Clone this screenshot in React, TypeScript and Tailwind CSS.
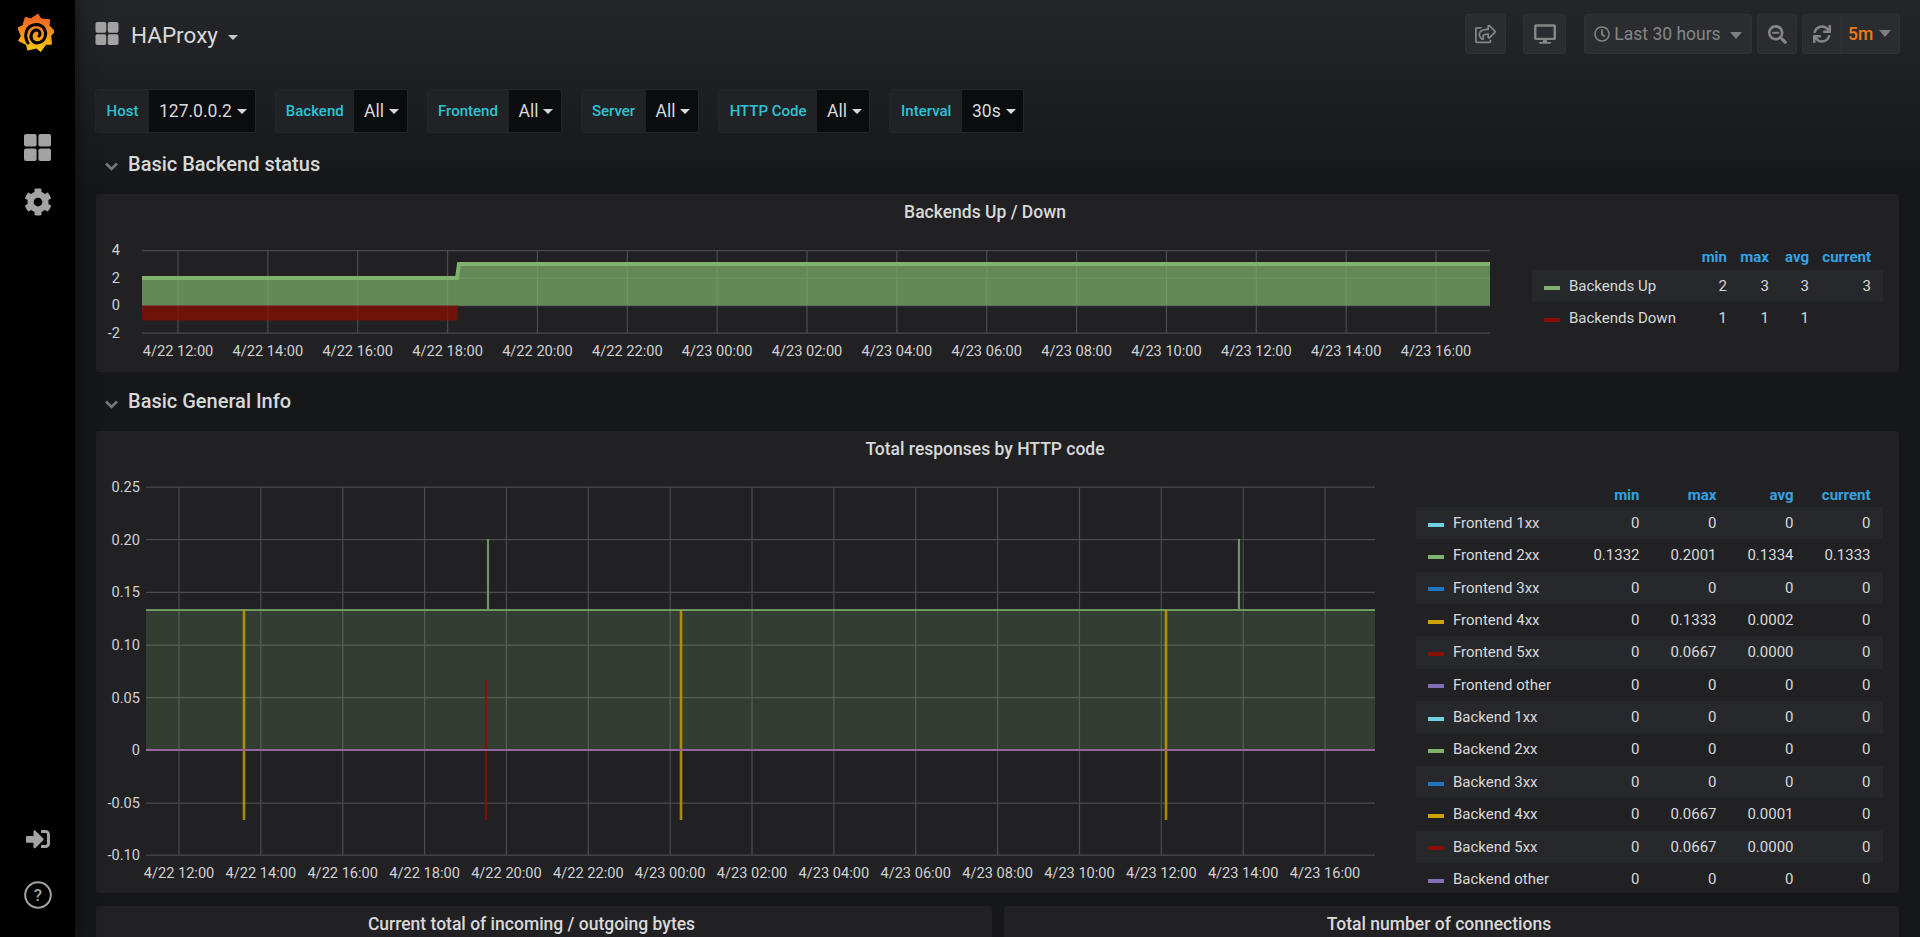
import React from 'react';
import { FaCog, FaDesktop, FaRegClock, FaRegShareSquare, FaSearchMinus, FaSignInAlt, FaSync } from 'react-icons/fa';

const font = { fontFamily: 'Roboto, "Noto Sans", sans-serif' };

// Rounded four-square grafana dashboard icon
const GridIcon = ({ className }: { className: string }) => (
  <svg viewBox="0 0 27 27" className={className} fill="currentColor">
    <rect x="0" y="0" width="12.6" height="12.6" rx="2" />
    <rect x="14.4" y="0" width="12.6" height="12.6" rx="2" />
    <rect x="0" y="14.4" width="12.6" height="12.6" rx="2" />
    <rect x="14.4" y="14.4" width="12.6" height="12.6" rx="2" />
  </svg>
);

// Nine teeth around the logo centre
const gearPath = (() => {
  const pts: string[] = [];
  for (let i = 0; i < 9; i++) {
    const a = ((i * 40 - 84) * Math.PI) / 180;
    const step = (12 * Math.PI) / 180;
    const p = (r: number, t: number) => `${(18 + r * Math.cos(t)).toFixed(2)} ${(20 + r * Math.sin(t)).toFixed(2)}`;
    pts.push(p(15.2, a - 2 * step), p(19, a), p(15.2, a + step));
  }
  return `M${pts.join('L')}Z`;
})();

const Logo = () => (
  <svg viewBox="0 0 36 39" className="w-[36px] h-[39px]">
    <defs>
      <linearGradient id="lg" x1="0" y1="0" x2="0" y2="1">
        <stop offset="0" stopColor="#f05a28" />
        <stop offset="1" stopColor="#fbca0a" />
      </linearGradient>
    </defs>
    <path fill="url(#lg)" stroke="url(#lg)" strokeLinejoin="round" d={gearPath} />
    <path
      fill="none"
      stroke="#000"
      strokeWidth="3"
      strokeLinecap="round"
      d="M10 30C6 24 7 12 18 11.5C26 11.5 29 19 27 24C25 30 17 32 14 27C11 22 15 16.5 19 17C22 17.5 23 21 21 23"
    />
  </svg>
);

const HelpIcon = () => (
  <svg viewBox="0 0 28 28" className="w-[28px] h-[28px] mt-[30px] mb-[28px]" style={font}>
    <circle cx="14" cy="14" r="12.8" fill="none" stroke="currentColor" strokeWidth="2" />
    <text x="14" y="20" textAnchor="middle" fontSize="17" fontWeight="500" fill="currentColor">?</text>
  </svg>
);

const Caret = ({ className }: { className: string }) => (
  <span className={`inline-block border-x-[5px] border-x-transparent border-t-[5px] ${className}`} />
);

const variables = [
  { label: 'Host', value: '127.0.0.2', labelW: 'w-[53px]', valueW: 'w-[105.5px]' },
  { label: 'Backend', value: 'All', labelW: 'w-[78.5px]', valueW: 'w-[52.5px]' },
  { label: 'Frontend', value: 'All', labelW: 'w-[81px]', valueW: 'w-[52px]' },
  { label: 'Server', value: 'All', labelW: 'w-[64px]', valueW: 'w-[52.6px]' },
  { label: 'HTTP Code', value: 'All', labelW: 'w-[98px]', valueW: 'w-[52.4px]' },
  { label: 'Interval', value: '30s', labelW: 'w-[71.5px]', valueW: 'w-[61px]' },
];

const NavBtn = ({ children, className }: { children: React.ReactNode; className: string }) => (
  <div className={`h-[40px] flex items-center justify-center rounded-[3px] bg-[#2b2c2f] border border-[#303134] text-[#858585] ${className}`}>
    {children}
  </div>
);

const Row = ({ title, className }: { title: string; className: string }) => (
  <div className={`flex items-center pl-[9px] ${className}`}>
    <svg viewBox="0 0 13 9" className="w-[13px] h-[9px] mt-[6px] text-[#777]" fill="none" stroke="currentColor" strokeWidth="2.6">
      <path d="M1 1.5l5.5 5.5 5.5-5.5" />
    </svg>
    <span className="ml-[10px] text-[20px] font-medium text-[#d8d9da]">{title}</span>
  </div>
);

const Title = ({ text }: { text: string }) => (
  <div className="h-[36px] flex items-center justify-center pr-[25px] text-[17.5px] font-medium text-[#d8d9da]">{text}</div>
);

const xLabels = ['4/22 12:00', '4/22 14:00', '4/22 16:00', '4/22 18:00', '4/22 20:00', '4/22 22:00', '4/23 00:00', '4/23 02:00', '4/23 04:00', '4/23 06:00', '4/23 08:00', '4/23 10:00', '4/23 12:00', '4/23 14:00', '4/23 16:00'];
const GRID = '#4a4b4d';
const AXIS = '#d0d1d3';

const UpDownChart = () => (
  <svg viewBox="96 230 1436 142" className="w-[1436px] h-[142px] shrink-0" style={font}>
    {[250.5, 278, 305.5, 333].map(y => <line key={y} x1="142" x2="1490" y1={y} y2={y} stroke={GRID} strokeWidth="1.25" />)}
    {xLabels.map((l, i) => {
      const x = 178 + i * 89.86;
      return (
        <g key={l}>
          <line x1={x} x2={x} y1="250" y2="333" stroke={GRID} strokeWidth="1.25" />
          <text x={x} y="356" textAnchor="middle" fontSize="14.6" fill={AXIS}>{l}</text>
        </g>
      );
    })}
    {[['4', 250], ['2', 277.5], ['0', 305], ['-2', 333]].map(([t, y]) => (
      <text key={t} x="120" y={Number(y) + 5} textAnchor="end" fontSize="14.6" fill={AXIS}>{t}</text>
    ))}
    <path d="M142 278H457L459 264H1490V305.5H142Z" fill="#7eb26d" fillOpacity="0.72" />
    <path d="M142 278H457L459 264H1490" fill="none" stroke="#7eb26d" strokeWidth="4" />
    <rect x="142" y="305.5" width="316" height="15" fill="#890f02" fillOpacity="0.75" />
  </svg>
);

const HttpChart = () => {
  const yTicks: [string, number][] = [['0.25', 487], ['0.20', 539.7], ['0.15', 592.3], ['0.10', 645], ['0.05', 697.7], ['0', 750], ['-0.05', 803], ['-0.10', 855]];
  return (
    <svg viewBox="96 467 1320 426" className="w-[1320px] h-[426px] shrink-0" style={font}>
      {yTicks.map(([t, y]) => (
        <g key={t}>
          <line x1="146" x2="1375" y1={y} y2={y} stroke={GRID} strokeWidth="1.25" />
          <text x="140" y={y + 5} textAnchor="end" fontSize="14.6" fill={AXIS}>{t}</text>
        </g>
      ))}
      {xLabels.map((l, i) => {
        const x = 179 + i * 81.86;
        return (
          <g key={l}>
            <line x1={x} x2={x} y1="487" y2="855" stroke={GRID} strokeWidth="1.25" />
            <text x={x} y="878" textAnchor="middle" fontSize="14.6" fill={AXIS}>{l}</text>
          </g>
        );
      })}
      <rect x="146" y="610" width="1229" height="140" fill="#7eb26d" fillOpacity="0.2" />
      <path d="M146 610H1375M488 610V539M1239 610V539" fill="none" stroke="#7eb26d" strokeOpacity="0.8" strokeWidth="2.2" />
      <path d="M486 680V820" stroke="#890f02" strokeOpacity="0.8" strokeWidth="2.4" />
      <path d="M244 610V820M681 610V820M1166 610V820" stroke="#cca300" strokeOpacity="0.8" strokeWidth="2.6" />
      <line x1="146" x2="1375" y1="750" y2="750" stroke="#93659a" strokeWidth="2.2" />
    </svg>
  );
};

const upDown = [
  { name: 'Backends Up', color: 'bg-[#7eb26d]', vals: ['2', '3', '3', '3'] },
  { name: 'Backends Down', color: 'bg-[#890f02]', vals: ['1', '1', '1', ''] },
];

const http = [
  { name: 'Frontend 1xx', color: 'bg-[#6ed0e0]', vals: ['0', '0', '0', '0'] },
  { name: 'Frontend 2xx', color: 'bg-[#7eb26d]', vals: ['0.1332', '0.2001', '0.1334', '0.1333'] },
  { name: 'Frontend 3xx', color: 'bg-[#1f78c1]', vals: ['0', '0', '0', '0'] },
  { name: 'Frontend 4xx', color: 'bg-[#cca300]', vals: ['0', '0.1333', '0.0002', '0'] },
  { name: 'Frontend 5xx', color: 'bg-[#890f02]', vals: ['0', '0.0667', '0.0000', '0'] },
  { name: 'Frontend other', color: 'bg-[#806eb7]', vals: ['0', '0', '0', '0'] },
  { name: 'Backend 1xx', color: 'bg-[#6ed0e0]', vals: ['0', '0', '0', '0'] },
  { name: 'Backend 2xx', color: 'bg-[#7eb26d]', vals: ['0', '0', '0', '0'] },
  { name: 'Backend 3xx', color: 'bg-[#1f78c1]', vals: ['0', '0', '0', '0'] },
  { name: 'Backend 4xx', color: 'bg-[#cca300]', vals: ['0', '0.0667', '0.0001', '0'] },
  { name: 'Backend 5xx', color: 'bg-[#890f02]', vals: ['0', '0.0667', '0.0000', '0'] },
  { name: 'Backend other', color: 'bg-[#806eb7]', vals: ['0', '0', '0', '0'] },
];

const LegendName = ({ name, color }: { name: string; color: string }) => (
  <div className="flex items-center pl-[12px] text-left">
    <span className={`w-[16px] h-[4px] mt-[3px] ${color}`} />
    <span className="ml-[9px] whitespace-nowrap">{name}</span>
  </div>
);

export default function App() {
  return (
    <div className="flex h-screen overflow-hidden text-[#d8d9da] bg-[linear-gradient(180deg,#242528_10px,#161719_190px)]" style={font}>
      {/* Side menu */}
      <aside className="w-[75px] shrink-0 bg-black flex flex-col items-center text-[#a3a3a3] shadow-[0_0_18px_rgba(0,0,0,0.55)] z-10">
        <div className="mt-[13px] ml-[-3px]"><Logo /></div>
        <GridIcon className="w-[27px] h-[27px] mt-[82px]" />
        <FaCog className="w-[28px] h-[28px] mt-[27px]" />
        <FaSignInAlt className="w-[24px] h-[24px] mt-auto" />
        <HelpIcon />
      </aside>

      <main className="flex-1 min-w-0 pl-[21px] pr-[21px]">
        {/* Nav */}
        <div className="h-[68px] pt-[14px] flex items-start">
          <GridIcon className="w-[24px] h-[23px] mt-[8px] text-[#a3a3a3] ml-[-1px]" />
          <span className="ml-[12px] mt-[5px] text-[22.5px] leading-[32px] text-[#d8d9da]">HAProxy</span>
          <Caret className="ml-[10px] mt-[21px] border-t-[#c8c8c8]" />
          <div className="ml-auto mr-[-1px] flex">
            <NavBtn className="w-[41px]"><FaRegShareSquare className="w-[21px] h-[20px]" /></NavBtn>
            <NavBtn className="w-[43px] ml-[17px]"><FaDesktop className="w-[22px] h-[20px]" /></NavBtn>
            <NavBtn className="w-[168px] ml-[18px] text-[17.5px]">
              <FaRegClock className="w-[16px] h-[16px] mr-[4px]" />
              Last 30 hours
              <Caret className="ml-[9px] mt-[2px] border-x-[6px] border-t-[7px] border-t-[#7f7f7f]" />
            </NavBtn>
            <NavBtn className="w-[40px] ml-[5px]"><FaSearchMinus className="w-[19px] h-[19px]" /></NavBtn>
            <NavBtn className="w-[98px] ml-[5px]">
              <div className="w-[38px] h-full flex items-center justify-center border-r border-[#303134]"><FaSync className="w-[18px] h-[18px]" /></div>
              <div className="flex-1 flex items-center pl-[7px] text-[17.5px] font-medium text-[#eb7b18]">
                5m
                <Caret className="ml-[6px] mt-[-2px] border-x-[6px] border-t-[7px] border-t-[#7f7f7f]" />
              </div>
            </NavBtn>
          </div>
        </div>

        {/* Template variables */}
        <div className="mt-[21px] h-[44px] flex gap-[19px] ml-[-1px]">
          {variables.map(v => (
            <div key={v.label} className="flex rounded-[3px] border border-[#262628] overflow-hidden">
              <div className={`flex items-center justify-center bg-[#212226] text-[15px] font-medium text-[#2bc4d4] ${v.labelW}`}>{v.label}</div>
              <div className={`flex items-center bg-[#0b0c0e] pl-[10px] text-[17.5px] text-[#d8d9da] ${v.valueW}`}>
                {v.value}
                <Caret className="ml-[5px] mt-[1px] border-t-[#d8d9da]" />
              </div>
            </div>
          ))}
        </div>

        <Row title="Basic Backend status" className="h-[61px]" />
        <section className="h-[178px] rounded-[3px] bg-[#212124] overflow-hidden">
          <Title text="Backends Up / Down" />
          <div className="flex">
            <UpDownChart />
            <div className="w-[351px] shrink-0 pt-[14px] text-[15px]">
              <div className="h-[26px] grid grid-cols-[154px_41px_42px_40px_62px] items-center text-right font-bold text-[#33a2e5]">
                <span /><span>min</span><span>max</span><span>avg</span><span>current</span>
              </div>
              {upDown.map((r, i) => (
                <div key={r.name} className={`h-[32px] grid grid-cols-[154px_41px_42px_40px_62px] items-center text-right ${i % 2 === 0 ? 'bg-[#27282b]' : ''}`}>
                  <LegendName name={r.name} color={r.color} />
                  <span>{r.vals[0]}</span><span>{r.vals[1]}</span><span>{r.vals[2]}</span><span>{r.vals[3]}</span>
                </div>
              ))}
            </div>
          </div>
        </section>

        <Row title="Basic General Info" className="h-[59px] pb-[1px]" />
        <section className="h-[462px] rounded-[3px] bg-[#212124] overflow-hidden">
          <Title text="Total responses by HTTP code" />
          <div className="flex">
            <HttpChart />
            <div className="w-[467px] shrink-0 pt-[16px] text-[15px]">
              <div className="h-[24px] grid grid-cols-[146.5px_77px_77px_77px_77px] items-center text-right font-bold text-[#33a2e5]">
                <span /><span>min</span><span>max</span><span>avg</span><span>current</span>
              </div>
              {http.map((r, i) => (
                <div key={r.name} className={`h-[32.36px] grid grid-cols-[146.5px_77px_77px_77px_77px] items-center text-right ${i % 2 === 0 ? 'bg-[#27282b]' : ''}`}>
                  <LegendName name={r.name} color={r.color} />
                  <span>{r.vals[0]}</span><span>{r.vals[1]}</span><span>{r.vals[2]}</span><span>{r.vals[3]}</span>
                </div>
              ))}
            </div>
          </div>
        </section>

        <div className="mt-[13px] flex gap-[12px]">
          <section className="w-[896px] h-[60px] rounded-[3px] bg-[#212124]">
            <Title text="Current total of incoming / outgoing bytes" />
          </section>
          <section className="flex-1 h-[60px] rounded-[3px] bg-[#212124]">
            <Title text="Total number of connections" />
          </section>
        </div>
      </main>
    </div>
  );
}
